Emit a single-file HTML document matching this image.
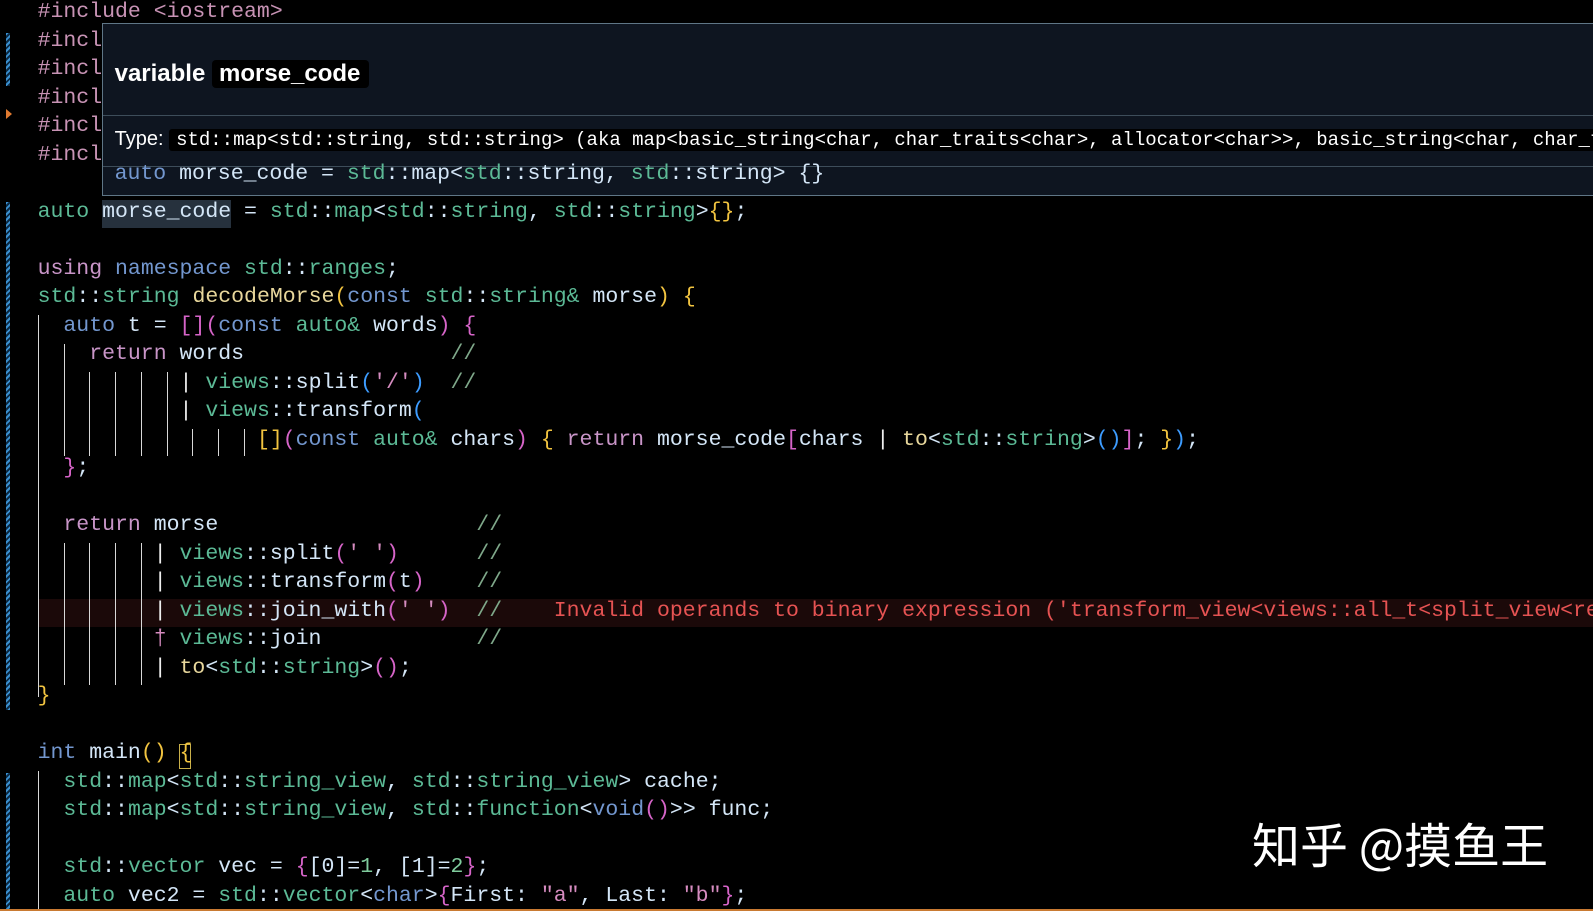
<!DOCTYPE html>
<html><head><meta charset="utf-8"><style>
html,body{margin:0;padding:0;background:#000;width:1593px;height:911px;overflow:hidden;position:relative}
#c{position:absolute;left:0;top:4px;width:1593px;height:911px;overflow:visible}
.l{position:absolute;left:37.6px;height:28.5px;line-height:28.5px;font:21.5px "Liberation Mono",monospace;color:#d4e6f7;white-space:pre}
.k{color:#7397cf}.g{color:#5cba96}.p{color:#c893b5}.r{color:#c995c8}.y{color:#f2c440}.m{color:#d664c8}.b{color:#3d9cff}.c{color:#7fa88a}.s{color:#d68cc0}.f{color:#e8d79c}.n{color:#7fcc9d}.e{color:#e65353}.w{color:#eee}
.gd{position:absolute;width:1px;background:#d8d8d8}
.hatch{position:absolute;left:6px;width:4px;background:repeating-linear-gradient(135deg,#3a8fcf 0 2px,#0b2a44 2px 4px)}
</style></head><body>
<div id="c">
<div class="hatch" style="top:29px;height:53px"></div>
<div class="hatch" style="top:198px;height:508px"></div>
<div class="hatch" style="top:769px;height:142px"></div>
<div style="position:absolute;left:6px;top:105px;width:0;height:0;border-left:6px solid #e07a30;border-top:5px solid transparent;border-bottom:5px solid transparent"></div>

<div style="position:absolute;left:38px;right:0;top:594.5px;height:28.5px;background:#1b0909"></div>
<div style="position:absolute;left:102px;top:195.5px;width:129px;height:28.5px;background:#26313d"></div>
<div style="position:absolute;left:179px;top:740px;width:12px;height:25px;border:1px solid #c9b04a;box-sizing:border-box"></div>

<div class="l" style="top:-4px"><span class="p">#include &lt;iostream&gt;</span></div>
<div class="l" style="top:24.5px"><span class="p">#incl</span></div>
<div class="l" style="top:53px"><span class="p">#incl</span></div>
<div class="l" style="top:81.5px"><span class="p">#incl</span></div>
<div class="l" style="top:110px"><span class="p">#incl</span></div>
<div class="l" style="top:138.5px"><span class="p">#incl</span></div>
<div class="l" style="top:195.5px"><span class="g">auto</span> morse_code = <span class="g">std</span>::<span class="g">map</span>&lt;<span class="g">std</span>::<span class="g">string</span>, <span class="g">std</span>::<span class="g">string</span>&gt;<span class="y">{}</span>;</div>
<div class="l" style="top:252.5px"><span class="r">using</span> <span class="k">namespace</span> <span class="g">std</span>::<span class="g">ranges</span>;</div>
<div class="l" style="top:281px"><span class="g">std</span>::<span class="g">string</span> <span class="f">decodeMorse</span><span class="y">(</span><span class="k">const</span> <span class="g">std</span>::<span class="g">string&amp;</span> morse<span class="y">)</span> <span class="y">{</span></div>
<div class="l" style="top:309.5px">  <span class="k">auto</span> t = <span class="m">[](</span><span class="k">const</span> <span class="g">auto&amp;</span> words<span class="m">)</span> <span class="m">{</span></div>
<div class="l" style="top:338px">    <span class="r">return</span> words                <span class="c">//</span></div>
<div class="l" style="top:366.5px">           <span class="w">|</span> <span class="g">views</span>::split<span class="b">(</span><span class="s">'/'</span><span class="b">)</span>  <span class="c">//</span></div>
<div class="l" style="top:395px">           <span class="w">|</span> <span class="g">views</span>::transform<span class="b">(</span></div>
<div class="l" style="top:423.5px">                 <span class="y">[]</span><span class="m">(</span><span class="k">const</span> <span class="g">auto&amp;</span> chars<span class="m">)</span> <span class="y">{</span> <span class="r">return</span> morse_code<span class="m">[</span>chars <span class="w">|</span> <span class="f">to</span>&lt;<span class="g">std</span>::<span class="g">string</span>&gt;<span class="b">()</span><span class="m">]</span>; <span class="y">}</span><span class="b">)</span>;</div>
<div class="l" style="top:452px">  <span class="m">}</span>;</div>
<div class="l" style="top:509px">  <span class="r">return</span> morse                    <span class="c">//</span></div>
<div class="l" style="top:537.5px">         <span class="w">|</span> <span class="g">views</span>::split<span class="m">(</span><span class="s">' '</span><span class="m">)</span>      <span class="c">//</span></div>
<div class="l" style="top:566px">         <span class="w">|</span> <span class="g">views</span>::transform<span class="m">(</span>t<span class="m">)</span>    <span class="c">//</span></div>
<div class="l" style="top:594.5px">         <span class="w">|</span> <span class="g">views</span>::join_with<span class="m">(</span><span class="s">' '</span><span class="m">)</span>  <span class="c">//</span>    <span class="e">Invalid operands to binary expression ('transform_view&lt;views::all_t&lt;split_view&lt;ref</span></div>
<div class="l" style="top:623px">         <span class="s">†</span> <span class="g">views</span>::join            <span class="c">//</span></div>
<div class="l" style="top:651.5px">         <span class="w">|</span> <span class="f">to</span>&lt;<span class="g">std</span>::<span class="g">string</span>&gt;<span class="m">()</span>;</div>
<div class="l" style="top:680px"><span class="y">}</span></div>
<div class="l" style="top:737px"><span class="k">int</span> main<span class="y">()</span> <span class="y">{</span></div>
<div class="l" style="top:765.5px">  <span class="g">std</span>::<span class="g">map</span>&lt;<span class="g">std</span>::<span class="g">string_view</span>, <span class="g">std</span>::<span class="g">string_view</span>&gt; cache;</div>
<div class="l" style="top:794px">  <span class="g">std</span>::<span class="g">map</span>&lt;<span class="g">std</span>::<span class="g">string_view</span>, <span class="g">std</span>::<span class="g">function</span>&lt;<span class="k">void</span><span class="m">()</span>&gt;&gt; func;</div>
<div class="l" style="top:851px">  <span class="g">std</span>::<span class="g">vector</span> vec = <span class="m">{</span>[0]=<span class="n">1</span>, [1]=<span class="n">2</span><span class="m">}</span>;</div>
<div class="l" style="top:879.5px">  <span class="g">auto</span> vec2 = <span class="g">std</span>::<span class="g">vector</span>&lt;<span class="k">char</span>&gt;<span class="m">{</span>First: <span class="s">"a"</span>, Last: <span class="s">"b"</span><span class="m">}</span>;</div>

<div class="gd" style="left:38px;top:311px;height:382px"></div>
<div class="gd" style="left:38px;top:767px;height:144px"></div>
<div class="gd" style="left:64px;top:340px;height:112px"></div>
<div class="gd" style="left:89px;top:368px;height:84px"></div>
<div class="gd" style="left:115px;top:368px;height:84px"></div>
<div class="gd" style="left:141px;top:368px;height:84px"></div>
<div class="gd" style="left:167px;top:368px;height:84px"></div>
<div class="gd" style="left:192px;top:425px;height:27px"></div>
<div class="gd" style="left:218px;top:425px;height:27px"></div>
<div class="gd" style="left:244px;top:425px;height:27px"></div>
<div class="gd" style="left:64px;top:539px;height:142px"></div>
<div class="gd" style="left:89px;top:539px;height:142px"></div>
<div class="gd" style="left:115px;top:539px;height:142px"></div>
<div class="gd" style="left:141px;top:539px;height:142px"></div>
</div>

<div style="position:absolute;left:101.6px;top:23.4px;width:1500px;height:173px;background:#0e1520;border:1px solid #5f7686;box-sizing:border-box;overflow:hidden">
  <div style="position:absolute;left:12px;top:36px;height:30px;line-height:30px;font:bold 24px 'Liberation Sans',sans-serif;color:#fff">variable <span style="background:#000;border-radius:4px;padding:0 9px 0 7px;display:inline-block">morse_code</span></div>
  <div style="position:absolute;left:0;right:0;top:91px;height:1px;background:#3d4d5a"></div>
  <div style="position:absolute;left:12px;top:104px;height:29px;line-height:29px;font:20px 'Liberation Sans',sans-serif;color:#fff;white-space:pre">Type: <span style="background:#000;border-radius:3px;padding:0 7px;display:inline-block;font:19px 'Liberation Mono',monospace">std::map&lt;std::string, std::string&gt; (aka map&lt;basic_string&lt;char, char_traits&lt;char&gt;, allocator&lt;char&gt;&gt;, basic_string&lt;char, char_traits&lt;char&gt;, allocator&lt;char&gt;&gt;&gt;)</span></div>
  <div style="position:absolute;left:0;right:0;top:142px;height:1px;background:#3d4d5a"></div>
  <div class="l" style="left:12px;top:138px"><span class="k">auto</span> morse_code = <span class="g">std</span>::map&lt;<span class="g">std</span>::string, <span class="g">std</span>::string&gt; {}</div>
</div>

<div style="position:absolute;left:1252px;top:810px;font:48px 'Noto Sans CJK SC',sans-serif;color:#fff;line-height:64px;white-space:pre">知乎 @摸鱼王</div>
<div style="position:absolute;left:0;right:0;bottom:0;height:2px;background:#c97a32"></div>
</body></html>
